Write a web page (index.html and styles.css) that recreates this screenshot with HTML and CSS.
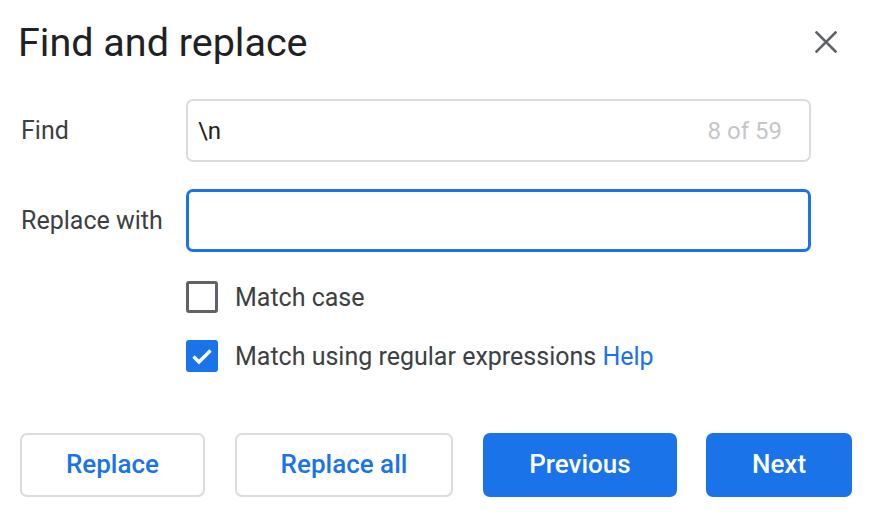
FILE: index.html
```html
<!DOCTYPE html>
<html>
<head>
<meta charset="utf-8">
<link rel="stylesheet" href="styles.css">
</head>
<body>
<div class="dialog">
  <div class="header">
    <h1 class="title">Find and replace</h1>
    <svg class="close" width="22" height="22" viewBox="0 0 22 22"><path d="M1.5 1.5L20.5 20.5M20.5 1.5L1.5 20.5" stroke="#5f6368" stroke-width="2.6" stroke-linecap="square"/></svg>
  </div>
  <div class="form">
    <div class="row">
      <div class="label">Find</div>
      <div class="input">
        <span class="value">\n</span>
        <span class="count">8 of 59</span>
      </div>
    </div>
    <div class="row row-replace">
      <div class="label">Replace with</div>
      <div class="input focused"></div>
    </div>
    <div class="checks">
      <div class="check-row">
        <span class="box"></span>
        <span class="check-label">Match case</span>
      </div>
      <div class="check-row">
        <span class="box checked"><svg width="32" height="32" viewBox="0 0 32 32"><path d="M7.5 16.5L13 22L24.5 10.5" fill="none" stroke="#fff" stroke-width="3.4"/></svg></span>
        <span class="check-label">Match using regular expressions <a class="help">Help</a></span>
      </div>
    </div>
    <div class="buttons">
      <div class="btn outline w-replace">Replace</div>
      <div class="btn outline w-replace-all">Replace all</div>
      <div class="btn primary w-prev">Previous</div>
      <div class="btn primary w-next">Next</div>
    </div>
  </div>
</div>
</body>
</html>
```
FILE: styles.css
```css
html, body {
  margin: 0;
  background: #fff;
}
body {
  font-family: Roboto, "Liberation Sans", sans-serif;
  color: #3c4043;
}
.dialog {
  width: 883px;
  box-sizing: border-box;
  padding-left: 20px;
}
.header {
  height: 84px;
  display: flex;
  align-items: center;
  justify-content: space-between;
  padding-right: 46px;
}
.title {
  margin: 0 0 0 -2px;
  font-size: 39.5px;
  font-weight: 400;
  color: #202124;
}
.close {
  display: block;
}
.form {
  margin-top: 15px;
}
.row {
  display: flex;
  align-items: center;
}
.row-replace {
  margin-top: 27px;
}
.label {
  width: 166px;
  padding-left: 1px;
  box-sizing: border-box;
  font-size: 25px;
}
.input {
  width: 625px;
  height: 63px;
  box-sizing: border-box;
  border: 2px solid #dadce0;
  border-radius: 7px;
  display: flex;
  align-items: center;
  justify-content: space-between;
  padding: 0 27px 0 10px;
  font-size: 24px;
}
.input.focused {
  border: 3px solid #1a73e8;
}
.value {
  color: #202124;
}
.count {
  color: #c4c7c9;
}
.checks {
  margin-top: 29px;
  padding-left: 166px;
  display: flex;
  flex-direction: column;
  gap: 27px;
}
.check-row {
  display: flex;
  align-items: center;
  height: 32px;
}
.box {
  width: 32px;
  height: 32px;
  box-sizing: border-box;
  border: 3px solid #5f6368;
  border-radius: 3px;
  margin-right: 17px;
  flex: none;
}
.box.checked {
  border: none;
  background: #1a73e8;
}
.box svg {
  display: block;
}
.check-label {
  font-size: 25px;
}
.help {
  color: #1a73e8;
}
.buttons {
  margin-top: 61px;
  display: flex;
}
.btn {
  height: 64px;
  box-sizing: border-box;
  border-radius: 7px;
  display: flex;
  align-items: center;
  justify-content: center;
  font-size: 26px;
  font-weight: 500;
  padding-bottom: 2px;
}
.outline {
  border: 2px solid #dadce0;
  color: #1a73e8;
}
.primary {
  background: #1a73e8;
  color: #fff;
}
.w-replace { width: 185px; }
.w-replace-all { width: 218px; margin-left: 30px; }
.w-prev { width: 194px; margin-left: 30px; }
.w-next { width: 146px; margin-left: 29px; }
```
